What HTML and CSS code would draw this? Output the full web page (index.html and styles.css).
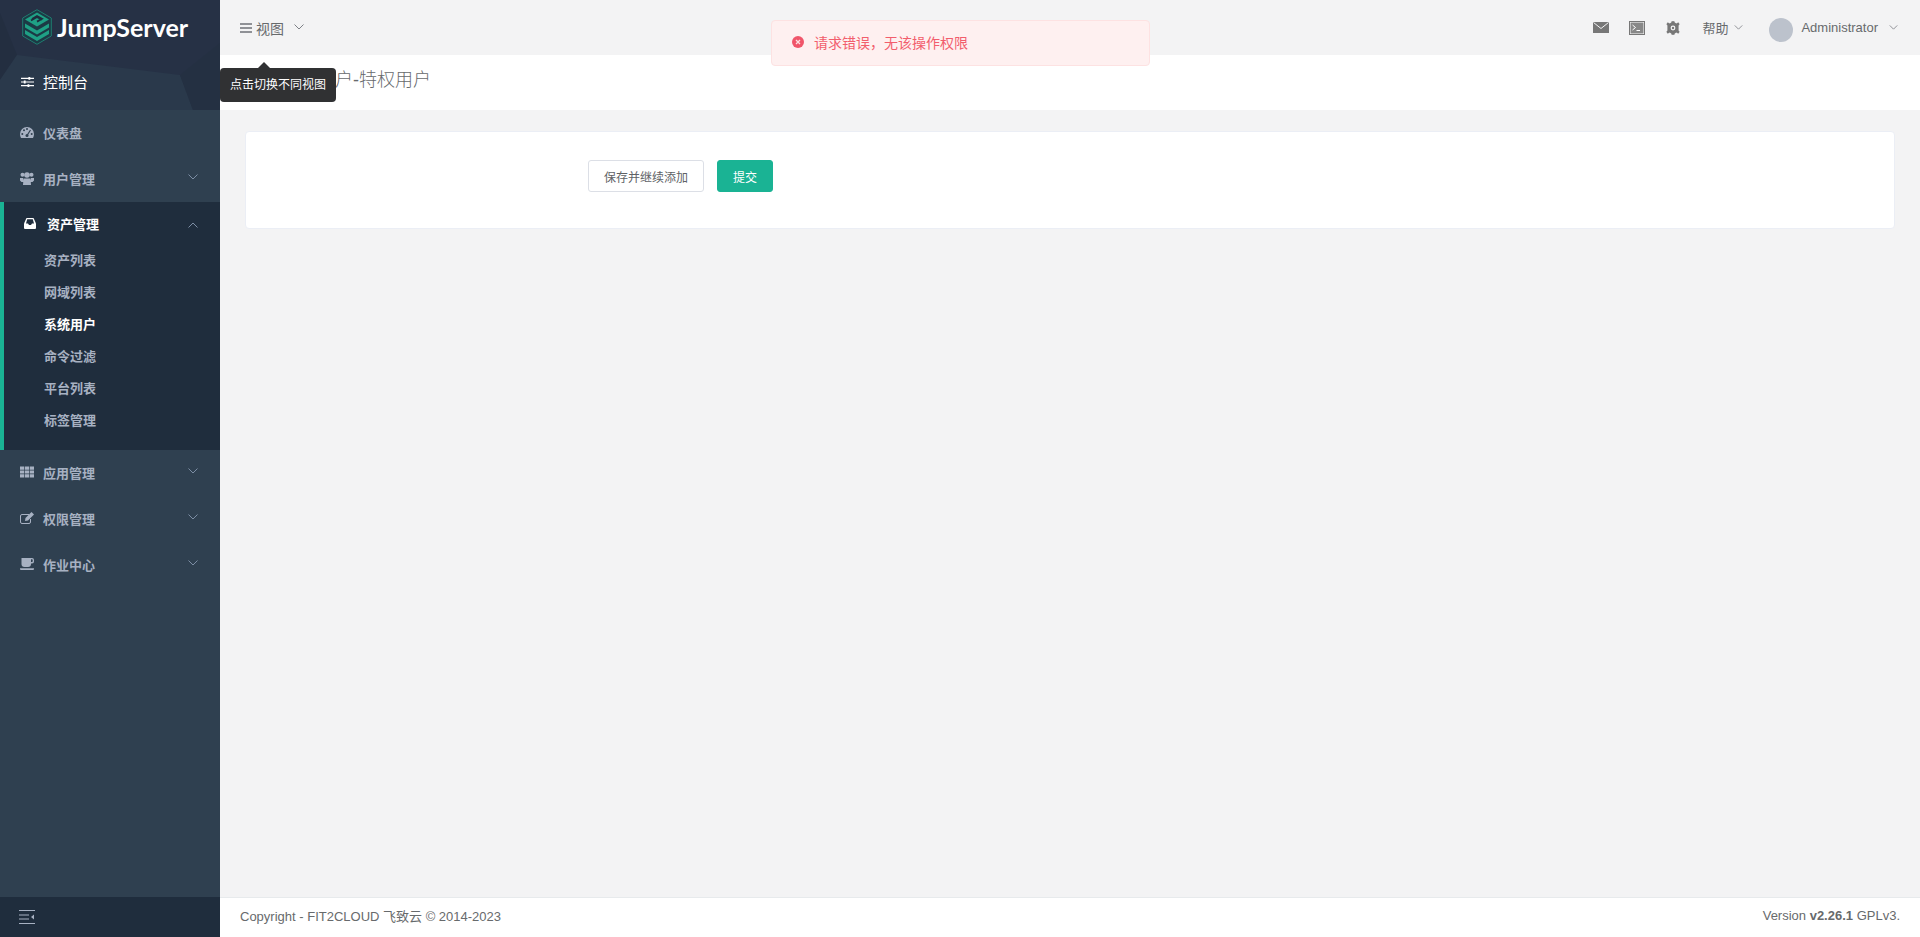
FILE: index.html
```html
<!DOCTYPE html>
<html lang="zh-CN">
<head>
<meta charset="utf-8">
<title>JumpServer</title>
<link rel="stylesheet" href="styles.css">
</head>
<body>
<aside class="sidebar">
  <div class="side-top">
    <svg class="side-pattern" viewBox="0 0 220 110" preserveAspectRatio="none">
      <polygon points="0,13 17,55 0,80" fill="#232e40"/>
      <polygon points="17,55 180,75 193,110 0,110 0,80" fill="#2a394b"/>
      <polygon points="180,75 220,43 220,110 193,110" fill="#243042"/>
    </svg>
    <div class="logo">
      <svg class="logo-mark" viewBox="0 0 30 36">
        <polygon points="15,0.7 29.3,9 29.3,27 15,35.3 0.7,27 0.7,9" fill="#1c3a45" stroke="#1f7d70" stroke-width="1"/>
        <path d="M15 3.500 27 10.500 15 17.500 3 10.500Z" fill="#1fa085"/>
        <path d="M9 11.500 15 8 20 10.800M10 10 15 7 20 9.800 15 12.600" fill="none" stroke="#1d2c3c" stroke-width="1.800"/>
        <path d="M3 14.500 15 21.500 27 14.500V18.500L15 25.500 3 18.500Z" fill="#1fa085"/>
        <path d="M3 21 15 28 27 21V25L15 32 3 25Z" fill="#1fa085"/>
      </svg>
      <span class="logo-text">JumpServer</span>
    </div>
    <div class="console">
      <svg class="console-icon" viewBox="0 0 14 12"><path d="M0 2h14M0 6h14M0 10h14" stroke="#fff" stroke-width="1.300" fill="none"/><path d="M8 .500h2v3H8zM3 4.500h2v3H3zM7 8.500h2v3H7z" fill="#fff"/></svg>
      <span>控制台</span>
    </div>
  </div>
  <nav class="nav">
    <a class="item">
      <svg class="ic" viewBox="0 0 14 12"><path d="M7 1a7 7 0 0 0-7 7c0 1.500.4 2.800 1 4h12c.6-1.200 1-2.500 1-4a7 7 0 0 0-7-7Z" fill="#a7b1c2"/><g fill="#2f4050"><circle cx="2.300" cy="8" r="1"/><circle cx="4" cy="4.300" r="1"/><circle cx="7" cy="3" r="1"/><circle cx="11.700" cy="8" r="1"/><circle cx="7" cy="9.500" r="1.500"/></g><path d="M7 9.500 10.500 4" stroke="#2f4050" stroke-width="1.200"/></svg>
      <span class="label">仪表盘</span>
    </a>
    <a class="item">
      <svg class="ic ic-tall" viewBox="0 0 14 13"><g fill="#a7b1c2"><circle cx="2.500" cy="2.800" r="2"/><circle cx="11.500" cy="2.800" r="2"/><circle cx="7" cy="3" r="2.800"/><path d="M0 6h3l.500 4H1.500L0 8.500zM11 6h3v2.500L12.500 10h-2zM3.500 6.500h7L11 13H3z"/></g></svg>
      <span class="label">用户管理</span>
      <svg class="chev" viewBox="0 0 10 6"><path d="M.5.500 5 5 9.500.500" fill="none" stroke="#7d8ea5"/></svg>
    </a>
    <div class="group">
      <a class="item open">
        <svg class="ic-open" viewBox="0 0 12 11"><path d="M2.500 0h7L12 5.500v4.500a1 1 0 0 1-1 1H1a1 1 0 0 1-1-1V5.500Z" fill="#fff"/><path d="M3.200 1.300h5.600L10 5.500H8L7 7H5L4 5.500H2Z" fill="#1f2d3d"/></svg>
        <span class="label">资产管理</span>
        <svg class="chev chev-up" viewBox="0 0 10 6"><path d="M.5 5.500 5 1l4.500 4.500" fill="none" stroke="#7d8ea5"/></svg>
      </a>
      <ul class="sub">
        <li>资产列表</li>
        <li>网域列表</li>
        <li class="current">系统用户</li>
        <li>命令过滤</li>
        <li>平台列表</li>
        <li>标签管理</li>
      </ul>
    </div>
    <a class="item">
      <svg class="ic" viewBox="0 0 14 11"><path d="M0 0h4.200v3.200H0zM4.900 0h4.200v3.200H4.900zM9.800 0H14v3.200H9.800zM0 3.900h4.200v3.200H0zM4.900 3.900h4.200v3.200H4.900zM9.800 3.900H14v3.200H9.800zM0 7.800h4.200V11H0zM4.900 7.800h4.200V11H4.900zM9.800 7.800H14V11H9.800z" fill="#a7b1c2"/></svg>
      <span class="label">应用管理</span>
      <svg class="chev" viewBox="0 0 10 6"><path d="M.5.500 5 5 9.500.500" fill="none" stroke="#7d8ea5"/></svg>
    </a>
    <a class="item">
      <svg class="ic" viewBox="0 0 14 12"><path d="M9 2.500H2a1.500 1.500 0 0 0-1.500 1.500v6A1.500 1.500 0 0 0 2 11.500h7a1.500 1.500 0 0 0 1.500-1.500V7" fill="none" stroke="#a7b1c2"/><path d="M11.500 0 14 2.500 8 8.500l-3 .5.500-3Z" fill="#a7b1c2"/></svg>
      <span class="label">权限管理</span>
      <svg class="chev" viewBox="0 0 10 6"><path d="M.5.500 5 5 9.500.500" fill="none" stroke="#7d8ea5"/></svg>
    </a>
    <a class="item">
      <svg class="ic" viewBox="0 0 14 12"><path d="M1.500 0H11v6a3 3 0 0 1-3 3H4.500a3 3 0 0 1-3-3Z" fill="#a7b1c2"/><path d="M11 0h1a2 2 0 0 1 2 2v1.500a2 2 0 0 1-2 2h-1v-1.500h1a.7.700 0 0 0 .7-.7V2a.7.700 0 0 0-.7-.7h-1Z" fill="#a7b1c2"/><path d="M0 10.300h14V11a1 1 0 0 1-1 1H1a1 1 0 0 1-1-1Z" fill="#a7b1c2"/></svg>
      <span class="label">作业中心</span>
      <svg class="chev" viewBox="0 0 10 6"><path d="M.5.500 5 5 9.500.500" fill="none" stroke="#7d8ea5"/></svg>
    </a>
  </nav>
  <div class="side-foot">
    <svg class="collapse" viewBox="0 0 16 14"><path d="M0 .500h16M0 13.500h16M0 5h10M0 9h10" stroke="#a7b1c2" fill="none"/><path d="M15 4.500v5l-3-2.500Z" fill="#a7b1c2"/></svg>
  </div>
</aside>

<main class="main">
  <header class="topbar">
    <div class="view-switch">
      <svg class="bars" viewBox="0 0 12 10"><path d="M0 1h12M0 5h12M0 9h12" stroke="#6f7277" stroke-width="1.400"/></svg>
      <span>视图</span>
      <svg class="chev-top" viewBox="0 0 10 6"><path d="M.5.500 5 5 9.500.500" fill="none" stroke="#7d8086"/></svg>
    </div>
    <div class="top-right">
      <svg class="t-mail" viewBox="0 0 16 11"><path d="M0 0h16v11H0z" fill="#777"/><path d="M.5.500 8 6.500 15.500.500" fill="none" stroke="#f3f3f4"/></svg>
      <svg class="t-term" viewBox="0 0 16 14"><rect x=".5" y=".5" width="15" height="13" fill="#fff" stroke="#777"/><rect x="1.500" y="1.500" width="13" height="11" fill="#888"/><path d="M3.500 4 6.500 6.500 3.500 9M7.500 9.500h3.500" fill="none" stroke="#fff"/></svg>
      <svg class="t-gear" viewBox="0 0 14 14"><g fill="#777"><path d="M7 .5 12.600 3.750V10.250L7 13.500 1.400 10.250V3.750Z"/><path d="M5.500.300h3v2.500h-3zM5.500 11.200h3v2.500h-3zM.3 3.200l1.500-2 2.200 1.700-1.500 2zM13.700 3.200l-1.500-2L10 2.900l1.500 2zM.3 10.800l1.500 2 2.200-1.700-1.500-2zM13.700 10.800l-1.500 2-2.200-1.700 1.500-2z"/></g><circle cx="7" cy="7" r="2.400" fill="#f3f3f4"/><circle cx="7" cy="7" r="1.200" fill="#777"/></svg>
      <span class="t-help">帮助</span>
      <svg class="chev-small help-chev" viewBox="0 0 10 6"><path d="M.5.500 5 5 9.500.500" fill="none" stroke="#7d8086"/></svg>
      <span class="avatar"></span>
      <span class="t-user">Administrator</span>
      <svg class="chev-small" viewBox="0 0 10 6"><path d="M.5.500 5 5 9.500.500" fill="none" stroke="#7d8086"/></svg>
    </div>
  </header>
  <section class="heading"><h2>更新系统用户-特权用户</h2></section>
  <section class="content">
    <div class="card">
      <button class="btn btn-plain">保存并继续添加</button>
      <button class="btn btn-primary">提交</button>
    </div>
  </section>
  <footer class="foot">
    <span>Copyright - FIT2CLOUD 飞致云 © 2014-2023</span>
    <span>Version <b>v2.26.1</b> GPLv3.</span>
  </footer>
</main>

<div class="alert">
  <svg class="alert-ic" viewBox="0 0 12 12"><circle cx="6" cy="6" r="6" fill="#f0556a"/><path d="M4 4l4 4M8 4l-4 4" stroke="#fde2e2" stroke-width="1.300"/></svg>
  <span>请求错误，无该操作权限</span>
</div>
<div class="tooltip">点击切换不同视图</div>
</body>
</html>
```
FILE: styles.css
```css
* { box-sizing: border-box; }
html, body { height: 100%; }
body {
  margin: 0;
  display: flex;
  height: 937px;
  overflow: hidden;
  background: #f3f3f4;
  color: #676a6c;
  font-family: "Liberation Sans", "Noto Sans CJK SC", sans-serif;
  font-size: 13px;
}

.sidebar {
  width: 220px;
  flex: none;
  display: flex;
  flex-direction: column;
  background: #2f4050;
}
.side-top {
  position: relative;
  height: 110px;
  background: #263145;
}
.side-pattern {
  position: absolute;
  left: 0;
  top: 0;
  width: 220px;
  height: 110px;
}
.logo {
  position: relative;
  height: 55px;
  display: flex;
  align-items: center;
  padding: 0 0 1px 22px;
}
.logo-mark { width: 30px; height: 36px; flex: none; }
.logo-text {
  margin-left: 5px;
  color: #fff;
  font-family: "Lato", "Open Sans", sans-serif;
  font-weight: 700;
  font-size: 25px;
}
.console {
  position: relative;
  height: 55px;
  display: flex;
  align-items: center;
  padding: 0 0 2px 21px;
  color: #fff;
  font-size: 15px;
  gap: 9px;
}
.console-icon { width: 13px; height: 12px; }

.nav { flex: 1; }
.item {
  height: 46px;
  display: flex;
  align-items: center;
  padding: 0 20px 2px;
  color: #a7b1c2;
  font-weight: 600;
  font-size: 13px;
}
.ic { width: 14px; height: 12px; flex: none; margin-right: 9px; }
.ic-tall { height: 13px; }
.ic-open { width: 12px; height: 11px; flex: none; margin: 0 11px 0 4px; }
.label { flex: 1; }
.chev { width: 10px; height: 6px; margin: -2px 2px 0 0; }
.chev-up { margin-top: 2px; }

.group {
  height: 248px;
  background: #1f2d3d;
  border-left: 4px solid #1ab394;
}
.item.open {
  height: 43px;
  padding: 0 20px 0 16px;
  color: #fff;
}
.sub { list-style: none; margin: 0; padding: 0 0 0 40px; }
.sub li {
  height: 32px;
  line-height: 32px;
  color: #a7b1c2;
  font-weight: 600;
}
.sub li.current { color: #fff; }

.side-foot {
  height: 40px;
  background: #1f2d3d;
  display: flex;
  align-items: center;
  padding-left: 19px;
}
.collapse { width: 16px; height: 14px; }

.main {
  flex: 1;
  min-width: 0;
  display: flex;
  flex-direction: column;
}
.topbar {
  height: 55px;
  flex: none;
  display: flex;
  align-items: center;
  justify-content: space-between;
  padding: 0 22px 0 20px;
}
.view-switch {
  display: flex;
  align-items: center;
  font-size: 14px;
  color: #676a6c;
}
.bars { width: 12px; height: 10px; margin-right: 4px; }
.chev-top { width: 10px; height: 6px; margin: -2px 0 0 10px; }
.top-right { display: flex; align-items: center; }
.t-mail { width: 16px; height: 11px; margin-right: 20px; }
.t-term { width: 16px; height: 14px; margin-right: 21px; }
.t-gear { width: 14px; height: 14px; margin-right: 22px; }
.t-help { font-size: 13px; margin-right: 6px; }
.chev-small { width: 9px; height: 5px; }
.help-chev { margin-right: 26px; }
.avatar {
  width: 24px;
  height: 24px;
  border-radius: 50%;
  background: #bcc2cc;
  margin: 4px 8px 0 0;
}
.t-user { font-size: 13px; margin-right: 11px; }

.heading {
  height: 55px;
  flex: none;
  background: #fff;
  padding: 0 0 10px 25px;
  display: flex;
  align-items: center;
}
.heading h2 {
  margin: 0;
  font-size: 18px;
  font-weight: 300;
  color: #676a6c;
}
.content { flex: 1; padding: 21px 25px 20px; }
.card {
  height: 98px;
  background: #fff;
  border: 1px solid #ebeef5;
  border-radius: 4px;
  padding: 28px 0 0 342px;
  display: flex;
  align-items: flex-start;
  gap: 13px;
}
.btn {
  height: 32px;
  border-radius: 3px;
  font: inherit;
  font-size: 12px;
  padding: 0;
}
.btn-plain { width: 116px; background: #fff; border: 1px solid #dcdfe6; color: #606266; }
.btn-primary { width: 56px; background: #1ab394; border: 1px solid #1ab394; color: #fff; }

.foot {
  height: 40px;
  flex: none;
  background: #fff;
  border-top: 1px solid #e7eaec;
  display: flex;
  align-items: center;
  justify-content: space-between;
  padding: 0 20px 4px;
  font-size: 13px;
}

.alert {
  position: absolute;
  left: 771px;
  top: 20px;
  width: 379px;
  height: 46px;
  background: #fef0f0;
  border: 1px solid #fde2e2;
  border-radius: 4px;
  display: flex;
  align-items: center;
  padding: 0 0 2px 20px;
  gap: 10px;
  color: #f25d6c;
  font-size: 14px;
}
.alert-ic { width: 12px; height: 12px; }
.tooltip {
  position: absolute;
  left: 220px;
  top: 68px;
  width: 116px;
  height: 34px;
  background: #303133;
  color: #fff;
  border-radius: 4px;
  font-size: 12px;
  line-height: 34px;
  text-align: center;
}
.tooltip::before {
  content: "";
  position: absolute;
  left: 38px;
  top: -6px;
  border: 6px solid transparent;
  border-top: 0;
  border-bottom-color: #303133;
}
```
